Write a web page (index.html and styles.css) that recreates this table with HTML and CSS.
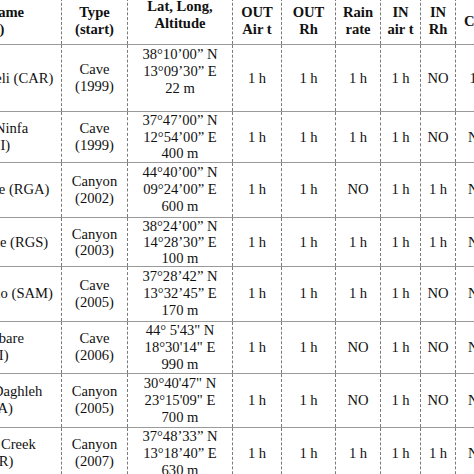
FILE: index.html
```html
<!DOCTYPE html>
<html lang="en">
<head>
<meta charset="utf-8">
<title>Monitoring sites</title>
<link rel="stylesheet" href="styles.css">
</head>
<body>
<div class="frame">
<table class="sites">
  <colgroup>
    <col class="c-name">
    <col class="c-type">
    <col class="c-pos">
    <col class="c-oat">
    <col class="c-orh">
    <col class="c-rain">
    <col class="c-iat">
    <col class="c-irh">
    <col class="c-co2">
  </colgroup>
  <thead>
    <tr class="r-head">
      <th>Site name<br>(id)</th>
      <th>Type<br>(start)</th>
      <th class="lift-h">Lat, Long,<br>Altitude</th>
      <th>OUT<br>Air t</th>
      <th>OUT<br>Rh</th>
      <th>Rain<br>rate</th>
      <th>IN<br>air t</th>
      <th>IN<br>Rh</th>
      <th>CO2</th>
    </tr>
  </thead>
  <tbody>
    <tr class="r-car">
      <td>Carburangeli (CAR)</td>
      <td>Cave<br>(1999)</td>
      <td class="lift">38°10’00” N<br>13°09’30” E<br>22 m</td>
      <td>1 h</td><td>1 h</td><td>1 h</td><td>1 h</td><td>NO</td><td>1 h</td>
    </tr>
    <tr class="r-sni">
      <td>Santa Ninfa<br>(SNI)</td>
      <td>Cave<br>(1999)</td>
      <td>37°47’00” N<br>12°54’00” E<br>400 m</td>
      <td>1 h</td><td>1 h</td><td>1 h</td><td>1 h</td><td>NO</td><td>NO</td>
    </tr>
    <tr class="r-rga">
      <td>Rio Grande (RGA)</td>
      <td>Canyon<br>(2002)</td>
      <td>44°40’00” N<br>09°24’00” E<br>600 m</td>
      <td>1 h</td><td>1 h</td><td>NO</td><td>1 h</td><td>1 h</td><td>NO</td>
    </tr>
    <tr class="r-rgs">
      <td>Rio Grande (RGS)</td>
      <td>Canyon<br>(2003)</td>
      <td>38°24’00” N<br>14°28’30” E<br>100 m</td>
      <td>1 h</td><td>1 h</td><td>1 h</td><td>1 h</td><td>1 h</td><td>NO</td>
    </tr>
    <tr class="r-sam">
      <td>Sant’Angelo (SAM)</td>
      <td>Cave<br>(2005)</td>
      <td>37°28’42” N<br>13°32’45” E<br>170 m</td>
      <td>1 h</td><td>1 h</td><td>1 h</td><td>1 h</td><td>NO</td><td>NO</td>
    </tr>
    <tr class="r-bji">
      <td>Bijambare<br>(BJI)</td>
      <td>Cave<br>(2006)</td>
      <td>44° 5'43" N<br>18°30'14" E<br>990 m</td>
      <td>1 h</td><td>1 h</td><td>NO</td><td>1 h</td><td>NO</td><td>NO</td>
    </tr>
    <tr class="r-sda">
      <td>Wadi el Daghleh<br>(SDA)</td>
      <td>Canyon<br>(2005)</td>
      <td>30°40'47" N<br>23°15'09" E<br>700 m</td>
      <td>1 h</td><td>1 h</td><td>NO</td><td>1 h</td><td>NO</td><td>NO</td>
    </tr>
    <tr class="r-gcr">
      <td>Torbido Creek<br>(GCR)</td>
      <td>Canyon<br>(2007)</td>
      <td>37°48’33” N<br>13°18’40” E<br>630 m</td>
      <td>1 h</td><td>1 h</td><td>1 h</td><td>1 h</td><td>1 h</td><td>NO</td>
    </tr>
  </tbody>
</table>
</div>
</body>
</html>
```
FILE: styles.css
```css
html, body {
  margin: 0;
  padding: 0;
  background: #ffffff;
}
.frame {
  width: 474px;
  height: 474px;
  overflow: hidden;
}
.sites {
  border-collapse: collapse;
  table-layout: fixed;
  width: 576px;
  margin-left: -75px;
  margin-top: -3px;
  font-family: "Liberation Serif", "Times New Roman", serif;
  font-size: 14.6px;
  line-height: 17px;
  color: #111111;
}
.c-name { width: 136px; }
.c-type { width: 66px; }
.c-pos { width: 105px; }
.c-oat { width: 49px; }
.c-orh { width: 54px; }
.c-rain { width: 45px; }
.c-iat { width: 40px; }
.c-irh { width: 35px; }
.c-co2 { width: 46px; }

.sites th,
.sites td {
  padding: 0;
  text-align: center;
  vertical-align: middle;
  white-space: nowrap;
  border-left: 1px dashed #7a7a7a;
  border-right: 1px dashed #7a7a7a;
  border-top: 1px solid #9a9a9a;
  border-bottom: 1px solid #9a9a9a;
}
.sites th {
  font-weight: bold;
}
.sites .lift-h { padding-bottom: 12px; }
.sites .lift { padding-bottom: 13px; }

.r-head { height: 46px; }
.r-car { height: 67px; }
.r-sni { height: 50px; line-height: 16.5px; }
.r-rga { height: 55px; }
.r-rgs { height: 48px; line-height: 16px; }
.r-sam { height: 55px; }
.r-bji { height: 52px; }
.r-sda { height: 54px; }
.r-gcr { height: 51px; }
```
